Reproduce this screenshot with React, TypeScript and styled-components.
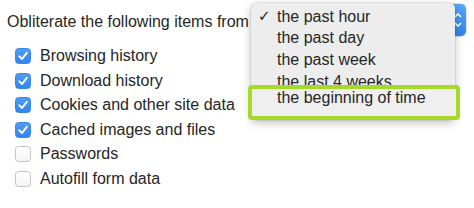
import React from 'react';
import styled, { createGlobalStyle } from 'styled-components';

const GlobalStyle = createGlobalStyle`
  html, body {
    margin: 0;
    padding: 0;
    background: #ffffff;
  }
  body {
    font-family: "Liberation Sans", Arial, sans-serif;
    color: #262626;
    -webkit-font-smoothing: antialiased;
  }
`;

const items = [
  { label: 'Browsing history', checked: true },
  { label: 'Download history', checked: true },
  { label: 'Cookies and other site data', checked: true },
  { label: 'Cached images and files', checked: true },
  { label: 'Passwords', checked: false },
  { label: 'Autofill form data', checked: false },
];

const periods = ['the past hour', 'the past day', 'the past week', 'the last 4 weeks'];

export default function App() {
  return (
    <>
      <GlobalStyle />
      <Page>
        <Header>
          <Title>Obliterate the following items from</Title>
          <SelectWrap>
            <SelectArrow>
              <svg width="16" height="32" viewBox="0 0 16 32">
                <path d="M5 13 L8 10 L11 13" fill="none" stroke="#fff" strokeWidth="1.6" />
                <path d="M5 19 L8 22 L11 19" fill="none" stroke="#fff" strokeWidth="1.6" />
              </svg>
            </SelectArrow>
            <Menu>
              {periods.map((p, i) => (
                <MenuItem key={p}>
                  {i === 0 && <Tick>✓</Tick>}
                  {p}
                </MenuItem>
              ))}
              <Highlight>the beginning of time</Highlight>
            </Menu>
          </SelectWrap>
        </Header>
        <List>
          {items.map((it) => (
            <Row key={it.label}>
              <Box $checked={it.checked}>
                {it.checked && (
                  <svg width="12" height="12" viewBox="0 0 12 12">
                    <path
                      d="M2.3 6.4 L5 9 L9.8 2.8"
                      fill="none"
                      stroke="#fff"
                      strokeWidth="2"
                      strokeLinecap="round"
                      strokeLinejoin="round"
                    />
                  </svg>
                )}
              </Box>
              <Label>{it.label}</Label>
            </Row>
          ))}
        </List>
      </Page>
    </>
  );
}

const Page = styled.div`
  width: 474px;
  height: 208px;
  overflow: hidden;
  position: relative;
`;

const Header = styled.div`
  display: flex;
  align-items: center;
  height: 42px;
  padding-left: 7px;
  padding-right: 8px;
`;

const Title = styled.div`
  font-size: 16px;
  white-space: nowrap;
  padding-top: 1px;
`;

const SelectWrap = styled.div`
  position: relative;
  margin-left: auto;
  width: 190px;
  height: 32px;
  margin-top: -3px;
  background: #fff;
  border-radius: 5px;
  box-shadow: 0 0 0 0.5px #c8c8c8, 0 1px 1px rgba(0, 0, 0, 0.1);
  display: flex;
  justify-content: flex-end;
`;

const SelectArrow = styled.div`
  width: 17px;
  height: 32px;
  border-radius: 0 5px 5px 0;
  background: linear-gradient(#5aa6f8, #2f84f0);
  display: flex;
  align-items: center;
  justify-content: center;
`;

const Menu = styled.div`
  position: absolute;
  top: -1px;
  right: 11px;
  width: 204px;
  padding-top: 3px;
  background: #ededed;
  border-radius: 5px;
  box-shadow: 0 0 0 0.5px rgba(0, 0, 0, 0.14), 0 3px 10px rgba(0, 0, 0, 0.24);
  z-index: 2;
`;

const MenuItem = styled.div`
  position: relative;
  height: 21.7px;
  line-height: 21.7px;
  padding-left: 26px;
  font-size: 16px;
  color: #262626;
  white-space: nowrap;
`;

const Tick = styled.span`
  position: absolute;
  left: 7px;
  top: 0;
  font-family: "DejaVu Sans", sans-serif;
  font-size: 15px;
  font-weight: bold;
`;

const Highlight = styled.div`
  position: relative;
  z-index: 3;
  margin: -6.8px -5px 0 -3px;
  border: 4px solid #a5d92a;
  border-radius: 4px;
  background: #efefef;
  box-sizing: border-box;
  height: 35px;
  padding: 0 0 0 25px;
  font-size: 16px;
  line-height: 18px;
  white-space: nowrap;
`;

const List = styled.div`
  display: flex;
  flex-direction: column;
  padding-left: 15px;
  margin-top: 1.75px;
`;

const Row = styled.div`
  display: flex;
  align-items: center;
  height: 24.5px;
  gap: 9px;
`;

const Box = styled.div<{ $checked: boolean }>`
  width: 16px;
  height: 16px;
  box-sizing: border-box;
  border-radius: 3.5px;
  display: flex;
  align-items: center;
  justify-content: center;
  background: ${(p) => (p.$checked ? 'linear-gradient(#4f9cf7, #2f84ef)' : 'linear-gradient(#ffffff, #f4f4f4)')};
  border: ${(p) => (p.$checked ? '1px solid #3a86e6' : '1px solid #c4c4c4')};
`;

const Label = styled.span`
  font-size: 16px;
  white-space: nowrap;
`;
